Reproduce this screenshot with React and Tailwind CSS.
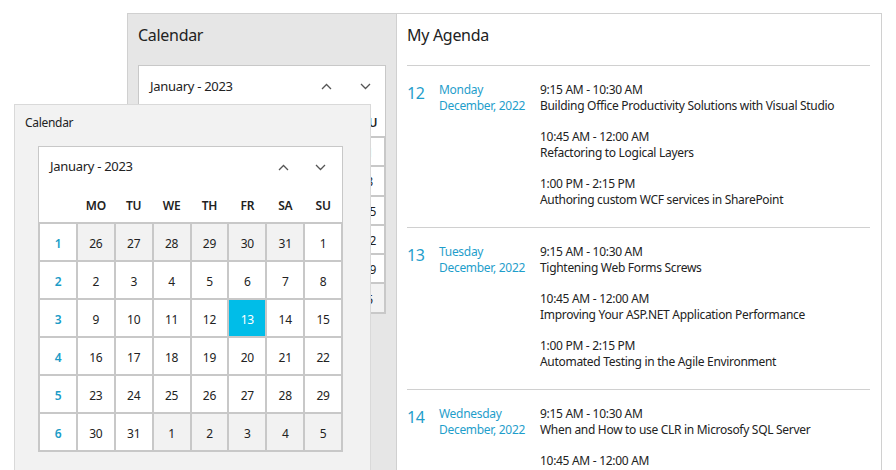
import React from "react";

const weeks = [
  { n: 1, days: [26, 27, 28, 29, 30, 31, 1], out: [0, 1, 2, 3, 4, 5] },
  { n: 2, days: [2, 3, 4, 5, 6, 7, 8], out: [] },
  { n: 3, days: [9, 10, 11, 12, 13, 14, 15], out: [] },
  { n: 4, days: [16, 17, 18, 19, 20, 21, 22], out: [] },
  { n: 5, days: [23, 24, 25, 26, 27, 28, 29], out: [] },
  { n: 6, days: [30, 31, 1, 2, 3, 4, 5], out: [2, 3, 4, 5, 6] },
];

const dayNames = ["MO", "TU", "WE", "TH", "FR", "SA", "SU"];

const agenda = [
  {
    day: 12,
    weekday: "Monday",
    items: [
      ["9:15 AM - 10:30 AM", "Building Office Productivity Solutions with Visual Studio"],
      ["10:45 AM - 12:00 AM", "Refactoring to Logical Layers"],
      ["1:00 PM - 2:15 PM", "Authoring custom WCF services in SharePoint"],
    ],
  },
  {
    day: 13,
    weekday: "Tuesday",
    items: [
      ["9:15 AM - 10:30 AM", "Tightening Web Forms Screws"],
      ["10:45 AM - 12:00 AM", "Improving Your ASP.NET Application Performance"],
      ["1:00 PM - 2:15 PM", "Automated Testing in the Agile Environment"],
    ],
  },
  {
    day: 14,
    weekday: "Wednesday",
    items: [
      ["9:15 AM - 10:30 AM", "When and How to use CLR in Microsofy SQL Server"],
      ["10:45 AM - 12:00 AM", "Data Access with Entity Framework"],
      ["1:00 PM - 2:15 PM", "Building Scalable Web Applications"],
    ],
  },
];

const Chevron = ({ up }) => (
  <svg width="11" height="7" viewBox="0 0 11 7" fill="none">
    <path
      d={up ? "M1 6 L5.5 1.5 L10 6" : "M1 1 L5.5 5.5 L10 1"}
      stroke="#555"
      strokeWidth="1.3"
    />
  </svg>
);

// sizes differ between the big and the small calendar, so classes are passed in
const MonthView = ({ box, header, chevGap, dayRow, cell, selected }) => (
  <div className={`bg-white border border-[#c8c8c8] ${box}`}>
    <div className={`flex items-center justify-between ${header}`}>
      <span className="text-[13px] text-[#222]">January - 2023</span>
      <div className={`flex items-center ${chevGap}`}>
        <Chevron up />
        <Chevron />
      </div>
    </div>
    <div className={`grid grid-cols-8 border-b border-[#c8c8c8] ${dayRow}`}>
      <div />
      {dayNames.map((d) => (
        <div key={d} className="flex items-center justify-center pt-[2px] text-[12px] font-semibold text-[#222]">
          {d}
        </div>
      ))}
    </div>
    <div className="grid grid-cols-8">
      {weeks.map((w) => (
        <React.Fragment key={w.n}>
          <div className={`flex items-center justify-center pt-[3px] border border-[#c8c8c8] bg-white text-[12px] font-semibold text-[#1b9cc7] ${cell}`}>
            {w.n}
          </div>
          {w.days.map((d, i) => {
            const isSel = selected && w.n === 3 && d === 13;
            const isOut = w.out.includes(i);
            return (
              <div
                key={i}
                className={`flex items-center justify-center pt-[3px] border border-[#c8c8c8] text-[12px] ${cell} ${
                  isSel ? "bg-[#00bde8] text-white" : isOut ? "bg-[#f2f2f2] text-[#222]" : "bg-white text-[#222]"
                }`}
              >
                {d}
              </div>
            );
          })}
        </React.Fragment>
      ))}
    </div>
  </div>
);

const AgendaDay = ({ data }) => (
  <div className="flex border-b border-[#d0d0d0] pt-[16px] pb-[19px]">
    <div className="w-[32px] text-[16px] leading-[22px] text-[#1f9ecb]">{data.day}</div>
    <div className="w-[101px] text-[12px] leading-[16px] text-[#1f9ecb]">
      <div>{data.weekday}</div>
      <div>December, 2022</div>
    </div>
    <div className="flex flex-col gap-[15px] text-[12px] leading-[16px] text-[#222]">
      {data.items.map(([time, title]) => (
        <div key={time}>
          <div>{time}</div>
          <div>{title}</div>
        </div>
      ))}
    </div>
  </div>
);

export default function App() {
  return (
    <div className="relative w-[896px] h-[470px] overflow-hidden bg-white font-['Noto_Sans',sans-serif] tracking-[-0.3px]">
      {/* back window */}
      <div className="absolute left-[127px] top-[13px] w-[755px] h-[500px] flex border border-[#d0d0d0]">
        <div className="w-[268px] bg-[#e6e6e6] pl-[10px] pt-[10px]">
          <h2 className="text-[16px] leading-[22px] text-[#222] mb-[19px]">Calendar</h2>
          <MonthView
            box="w-[248px]"
            header="h-[41px] pl-[11px] pr-[14px]"
            chevGap="gap-[28px]"
            dayRow="h-[30px]"
            cell="h-[29.3px]"
            selected
          />
        </div>
        <div className="flex-1 border-l border-[#d0d0d0] bg-white pl-[10px] pr-[11px] pt-[10px]">
          <h2 className="text-[16px] leading-[22px] text-[#222] mb-[19px]">My Agenda</h2>
          <div className="border-t border-[#d0d0d0]">
            {agenda.map((d) => (
              <AgendaDay key={d.day} data={d} />
            ))}
          </div>
        </div>
      </div>

      {/* front window */}
      <div className="absolute left-[14px] top-[104px] w-[357px] h-[420px] bg-[#f2f2f2] border border-[#d9d9d9] pt-[10px]">
        <h3 className="pl-[10px] text-[12px] leading-[16px] text-[#222] mb-[15px]">Calendar</h3>
        <div className="pl-[23px]">
          <MonthView
            box="w-[305px]"
            header="h-[40px] pl-[11px] pr-[16px]"
            chevGap="gap-[26px]"
            dayRow="h-[36px]"
            cell="h-[38px]"
            selected
          />
        </div>
      </div>
    </div>
  );
}
